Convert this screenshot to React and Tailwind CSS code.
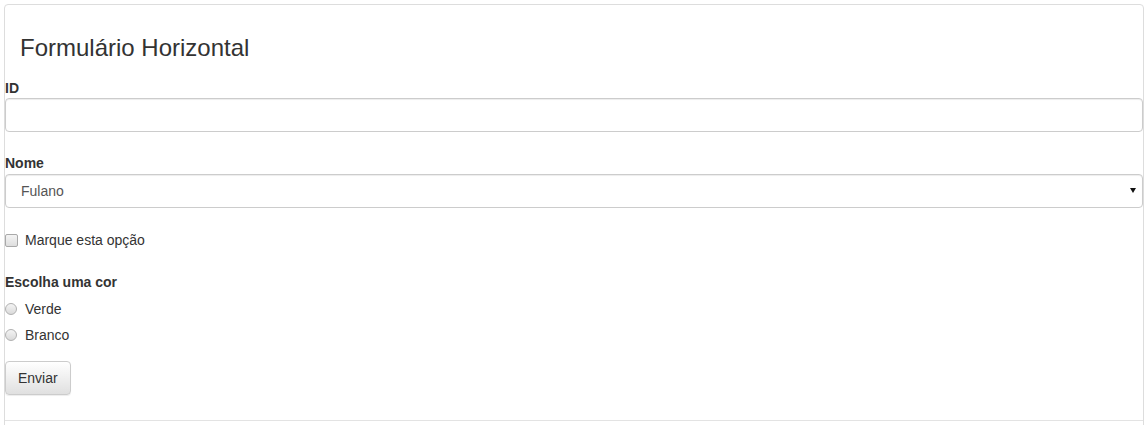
export default function App() {
  const font = { fontFamily: '"Liberation Sans", Arial, sans-serif' };
  return (
    <div className="bg-white min-h-[425px] pt-[4px]" style={font}>
      <div className="ml-[4px] w-[1140px] min-h-[460px] border border-[#ddd] rounded-[4px] text-[#333] text-[14px]">
        {/* --- TITRE --- */}
        <h3 className="mt-[30px] px-[15px] text-[24px] leading-[26px] font-normal text-[#333]">
          Formulário Horizontal
        </h3>

        <form onSubmit={(e) => e.preventDefault()}>
          {/* ID */}
          <label htmlFor="id" className="block mt-[19px] font-bold leading-[16px]">ID</label>
          <input
            id="id"
            type="text"
            className="block w-full h-[34px] mt-[2px] px-[12px] border border-[#ccc] rounded-[4px] text-[#555] shadow-[inset_0_1px_1px_rgba(0,0,0,0.075)] outline-none"
          />

          {/* Nome */}
          <label htmlFor="nome" className="block mt-[23px] font-bold leading-[16px]">Nome</label>
          <div className="relative mt-[3px]">
            <select
              id="nome"
              defaultValue="Fulano"
              className="block w-full h-[34px] pl-[15px] pr-[24px] appearance-none bg-white border border-[#ccc] rounded-[4px] text-[#555] text-[14px] shadow-[inset_0_1px_1px_rgba(0,0,0,0.075)] outline-none"
              style={font}
            >
              <option>Fulano</option>
              <option>Ciclano</option>
            </select>
            <svg className="absolute right-[7px] top-[14px] pointer-events-none" width="6" height="5" viewBox="0 0 6 5">
              <path d="M0 0 H6 L3 5 Z" fill="#111" />
            </svg>
          </div>

          {/* Checkbox */}
          <label className="flex items-center mt-[22px] leading-[20px] font-normal">
            <input
              type="checkbox"
              className="appearance-none w-[13px] h-[13px] m-0 border border-[#a9a9a9] rounded-[2px] bg-gradient-to-b from-[#f4f4f4] to-[#dedede]"
            />
            <span className="ml-[7px]">Marque esta opção</span>
          </label>

          {/* Radios */}
          <div className="mt-[24px] font-bold leading-[16px]">Escolha uma cor</div>
          <label className="flex items-center mt-[9px] leading-[20px] font-normal">
            <input
              type="radio"
              name="cor"
              className="appearance-none w-[12px] h-[12px] m-0 border border-[#b0b0b0] rounded-full bg-gradient-to-b from-[#f4f4f4] to-[#dadada]"
            />
            <span className="ml-[8px]">Verde</span>
          </label>
          <label className="flex items-center mt-[6px] leading-[20px] font-normal">
            <input
              type="radio"
              name="cor"
              className="appearance-none w-[12px] h-[12px] m-0 border border-[#b0b0b0] rounded-full bg-gradient-to-b from-[#f4f4f4] to-[#dadada]"
            />
            <span className="ml-[8px]">Branco</span>
          </label>

          {/* Bouton */}
          <button
            type="submit"
            className="block mt-[16px] h-[34px] px-[12px] border border-[#ccc] rounded-[4px] text-[#333] text-[14px] leading-[20px] bg-gradient-to-b from-white to-[#e0e0e0] shadow-[0_1px_1px_rgba(0,0,0,0.075)]"
            style={font}
          >
            Enviar
          </button>
        </form>

        <hr className="mt-[25px] border-0 border-t border-[#e3e3e3]" />
      </div>
    </div>
  );
}
